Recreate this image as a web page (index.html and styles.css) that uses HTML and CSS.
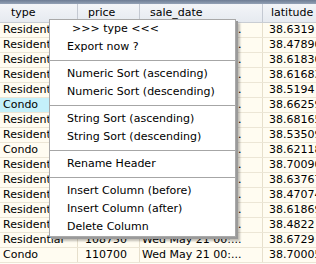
FILE: index.html
```html
<!DOCTYPE html>
<html>
<head>
<meta charset="utf-8">
<link rel="stylesheet" href="styles.css">
</head>
<body>
<div class="frame">
  <div class="band"></div>
  <div class="head">
    <div class="hc c1">type</div>
    <div class="hc c2">price</div>
    <div class="hc c3">sale_date</div>
    <div class="hc c4">latitude</div>
  </div>
  <div class="body">
    <div class="row"><div class="cell c1">Residential</div><div class="cell c2">59222</div><div class="cell c3">Wed May 21 00:...</div><div class="cell c4">38.6319</div></div>
    <div class="row"><div class="cell c1">Residential</div><div class="cell c2">68212</div><div class="cell c3">Wed May 21 00:...</div><div class="cell c4">38.478902</div></div>
    <div class="row"><div class="cell c1">Residential</div><div class="cell c2">68880</div><div class="cell c3">Wed May 21 00:...</div><div class="cell c4">38.618305</div></div>
    <div class="row"><div class="cell c1">Residential</div><div class="cell c2">69307</div><div class="cell c3">Wed May 21 00:...</div><div class="cell c4">38.616835</div></div>
    <div class="row"><div class="cell c1">Residential</div><div class="cell c2">81900</div><div class="cell c3">Wed May 21 00:...</div><div class="cell c4">38.5194</div></div>
    <div class="row"><div class="cell c1 sel">Condo</div><div class="cell c2">89921</div><div class="cell c3">Wed May 21 00:...</div><div class="cell c4">38.662595</div></div>
    <div class="row"><div class="cell c1">Residential</div><div class="cell c2">90895</div><div class="cell c3">Wed May 21 00:...</div><div class="cell c4">38.681659</div></div>
    <div class="row"><div class="cell c1">Residential</div><div class="cell c2">91002</div><div class="cell c3">Wed May 21 00:...</div><div class="cell c4">38.535092</div></div>
    <div class="row"><div class="cell c1">Condo</div><div class="cell c2">94905</div><div class="cell c3">Wed May 21 00:...</div><div class="cell c4">38.621188</div></div>
    <div class="row"><div class="cell c1">Residential</div><div class="cell c2">98937</div><div class="cell c3">Wed May 21 00:...</div><div class="cell c4">38.700909</div></div>
    <div class="row"><div class="cell c1">Residential</div><div class="cell c2">100309</div><div class="cell c3">Wed May 21 00:...</div><div class="cell c4">38.637678</div></div>
    <div class="row"><div class="cell c1">Residential</div><div class="cell c2">106250</div><div class="cell c3">Wed May 21 00:...</div><div class="cell c4">38.470746</div></div>
    <div class="row"><div class="cell c1">Residential</div><div class="cell c2">106852</div><div class="cell c3">Wed May 21 00:...</div><div class="cell c4">38.618698</div></div>
    <div class="row"><div class="cell c1">Residential</div><div class="cell c2">107502</div><div class="cell c3">Wed May 21 00:...</div><div class="cell c4">38.4822</div></div>
    <div class="row"><div class="cell c1">Residential</div><div class="cell c2">108750</div><div class="cell c3">Wed May 21 00:...</div><div class="cell c4">38.6729</div></div>
    <div class="row"><div class="cell c1">Condo</div><div class="cell c2">110700</div><div class="cell c3">Wed May 21 00:...</div><div class="cell c4">38.700051</div></div>
  </div>

  <div class="menu">
    <div class="item title">&gt;&gt;&gt; type &lt;&lt;&lt;</div>
    <div class="item">Export now ?</div>
    <div class="sep"></div>
    <div class="item">Numeric Sort (ascending)</div>
    <div class="item">Numeric Sort (descending)</div>
    <div class="sep"></div>
    <div class="item">String Sort (ascending)</div>
    <div class="item">String Sort (descending)</div>
    <div class="sep"></div>
    <div class="item">Rename Header</div>
    <div class="sep"></div>
    <div class="item">Insert Column (before)</div>
    <div class="item">Insert Column (after)</div>
    <div class="item">Delete Column</div>
  </div>
</div>
</body>
</html>
```

FILE: styles.css
```css
html, body {
  margin: 0;
  padding: 0;
  background: #fffdf6;
}
body {
  font-family: "DejaVu Sans", sans-serif;
  font-size: 11px;
  color: #000;
}
.frame {
  position: relative;
  width: 316px;
  height: 264px;
  overflow: hidden;
}
.band {
  height: 4px;
  background: linear-gradient(#6d7c93, #93a1b5);
}
.head {
  display: flex;
  height: 18px;
  border-bottom: 1px solid #c9cdd3;
  background: linear-gradient(#f3f5f8, #e6eaf0);
}
.hc {
  flex: none;
  box-sizing: border-box;
  line-height: 18px;
  white-space: nowrap;
  overflow: hidden;
  border-right: 1px solid #c4c9d2;
}
.head .c1 { width: 78px; padding-left: 11px; }
.head .c2 { width: 62px; padding-left: 10px; }
.head .c3 { width: 123px; padding-left: 10px; }
.head .c4 { width: 60px; padding-left: 8px; border-right: none; }

.row {
  display: flex;
  height: 14px;
  border-bottom: 1px solid #ece6d6;
  background: #fffcf1;
}
.cell {
  flex: none;
  box-sizing: border-box;
  line-height: 14px;
  white-space: nowrap;
  overflow: hidden;
  border-right: 1px solid #e6dfcc;
}
.row .c1 { width: 78px; padding-left: 3px; }
.row .c2 { width: 62px; padding-left: 7px; }
.row .c3 { width: 123px; padding-left: 2px; }
.row .c4 { width: 60px; padding-left: 6px; border-right: none; }
.cell.sel { background: #c4f0fa; }

.menu {
  position: absolute;
  left: 49px;
  top: 19px;
  width: 185px;
  background: #fff;
  border: 1px solid #a9a9a9;
  box-shadow: 2px 2px 0 #9a9a9a, 4px 4px 2px rgba(0,0,0,0.25);
}
.item {
  height: 18px;
  line-height: 18px;
  padding-left: 17px;
  white-space: nowrap;
}
.item.title { padding-left: 22px; }
.sep {
  height: 9px;
  display: flex;
  align-items: center;
}
.sep::before {
  content: "";
  flex: 1;
  height: 1px;
  background: #a6a6a6;
}
```
